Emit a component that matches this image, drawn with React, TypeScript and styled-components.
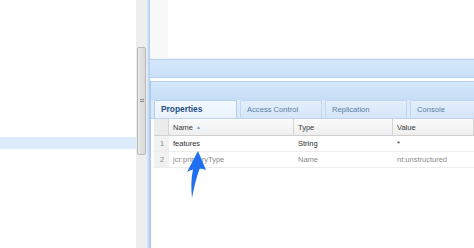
import styled, { createGlobalStyle } from 'styled-components';

const Global = createGlobalStyle`
  html, body { margin: 0; padding: 0; background: #fff; }
  body { font-family: "Liberation Sans", Arial, sans-serif; }
`;

const Screen = styled.div`
  position: relative;
  width: 474px;
  height: 248px;
  display: flex;
  overflow: hidden;
  background: #fff;
`;

const LeftPane = styled.div`
  width: 136px;
  flex-shrink: 0;
  padding-top: 137px;
  box-sizing: border-box;
`;

const SelectedRow = styled.div`
  height: 12px;
  background: #dcecfb;
`;

const ScrollTrack = styled.div`
  width: 11px;
  flex-shrink: 0;
  background: #eeeeee;
  padding-top: 47px;
  box-sizing: border-box;
  display: flex;
  justify-content: center;
`;

const Thumb = styled.div`
  width: 9px;
  height: 108px;
  box-sizing: border-box;
  border: 1px solid #b9b9b9;
  border-radius: 2px;
  background: linear-gradient(to right, #e9e9e9, #d9d9d9);
  display: flex;
  align-items: center;
  justify-content: center;
`;

const Grip = styled.div`
  width: 4px;
  height: 4px;
  background: repeating-linear-gradient(to bottom, #888 0 1px, transparent 1px 2px);
`;

const Splitter = styled.div`
  width: 3px;
  flex-shrink: 0;
  background: linear-gradient(to right, #d8e8f8, #c6dcf4 50%, #a9c9ec);
`;

const RightPane = styled.div`
  flex: 1;
  min-width: 0;
  overflow: hidden;
  display: flex;
  flex-direction: column;
  background: #fff;
`;

const TopArea = styled.div`
  height: 59px;
  display: flex;
  border-bottom: 1px solid #f0f4f8;
  box-sizing: border-box;
`;

const Gutter = styled.div`
  width: 18px;
  background: #f8f8f8;
`;

const Toolbar = styled.div`
  height: 17px;
  background: linear-gradient(to bottom, #d4e7fa, #c9e0f7);
  border-top: 1px solid #b9d3ef;
  border-bottom: 1px solid #b3cfee;
`;

const Panel = styled.div`
  flex: 1;
  margin-top: 3px;
  display: flex;
  flex-direction: column;
  border-left: 1px solid #a9c9ec;
`;

const PanelHead = styled.div`
  height: 19px;
  background: linear-gradient(to bottom, #d6e8fa, #c5ddf6);
  border-top: 1px solid #b8d2ee;
  box-sizing: border-box;
`;

const TabStrip = styled.div`
  display: flex;
  gap: 3px;
  padding: 0 0 0 3px;
  height: 18px;
  background: #dbe9f8;
  border-bottom: 1px solid #bcd4ee;
`;

const Tab = styled.div<{ $active?: boolean; $w: number }>`
  width: ${p => p.$w}px;
  flex-shrink: 0;
  box-sizing: border-box;
  border: 1px solid ${p => (p.$active ? '#b4cdea' : '#c2d7ef')};
  border-bottom: none;
  border-radius: 2px 2px 0 0;
  background: ${p =>
    p.$active
      ? 'linear-gradient(to bottom, #f4f9ff, #e9f2fc)'
      : 'linear-gradient(to bottom, #e2eefb, #d6e6f8)'};
  color: ${p => (p.$active ? '#234f86' : '#5a7ca3')};
  font-size: ${p => (p.$active ? '8.4px' : '7.6px')};
  font-weight: ${p => (p.$active ? 'bold' : 'normal')};
  line-height: 17px;
  padding-left: 6px;
  white-space: nowrap;
`;

const Grid = styled.div`
  margin-left: 3px;
  display: grid;
  grid-template-columns: 15px 125px 99px 1fr;
  font-size: 7.5px;
`;

const HeadCell = styled.div<{ $num?: boolean }>`
  height: 17px;
  line-height: 17px;
  box-sizing: border-box;
  padding-left: 4px;
  color: #3a3a3a;
  background: ${p => (p.$num ? '#ececec' : 'linear-gradient(to bottom, #fbfbfb, #eeeeee)')};
  border-right: 1px solid #d4d4d4;
  border-bottom: 1px solid #d0d0d0;
  white-space: nowrap;
`;

const Cell = styled.div<{ $num?: boolean; $dim?: boolean }>`
  height: 16px;
  line-height: 15px;
  box-sizing: border-box;
  padding-left: ${p => (p.$num ? 6 : 4)}px;
  color: ${p => (p.$dim ? '#8a8a8a' : '#2f2f2f')};
  background: ${p => (p.$num ? '#f1f1f1' : '#fff')};
  border-bottom: 1px solid #ededed;
  white-space: nowrap;
`;

const SortMark = styled.span`
  color: #7f9fc4;
  font-size: 5px;
  margin-left: 3px;
  vertical-align: 1px;
`;

const Arrow = styled.svg`
  position: absolute;
  left: 184px;
  top: 148px;
`;

const rows = [
  { n: 1, name: 'features', type: 'String', value: '*', dim: false },
  { n: 2, name: 'jcr:primaryType', type: 'Name', value: 'nt:unstructured', dim: true },
];

export default function App() {
  return (
    <Screen>
      <Global />
      <LeftPane>
        <SelectedRow />
      </LeftPane>
      <ScrollTrack>
        <Thumb>
          <Grip />
        </Thumb>
      </ScrollTrack>
      <Splitter />
      <RightPane>
        <TopArea>
          <Gutter />
        </TopArea>
        <Toolbar />
        <Panel>
          <PanelHead />
          <TabStrip>
            <Tab $active $w={83}>Properties</Tab>
            <Tab $w={82}>Access Control</Tab>
            <Tab $w={82}>Replication</Tab>
            <Tab $w={70}>Console</Tab>
          </TabStrip>
          <Grid>
            <HeadCell $num />
            <HeadCell>
              Name<SortMark>▲</SortMark>
            </HeadCell>
            <HeadCell>Type</HeadCell>
            <HeadCell>Value</HeadCell>
            {rows.map(r => (
              <>
                <Cell key={`n${r.n}`} $num $dim>{r.n}</Cell>
                <Cell key={`a${r.n}`} $dim={r.dim}>{r.name}</Cell>
                <Cell key={`t${r.n}`} $dim={r.dim}>{r.type}</Cell>
                <Cell key={`v${r.n}`} $dim={r.dim}>{r.value}</Cell>
              </>
            ))}
          </Grid>
        </Panel>
      </RightPane>
      <Arrow width="26" height="54" viewBox="0 0 26 54">
        <path
          d="M14 3 L22 22 C19 21 17 20.5 15.5 21 C12 30 10 40 8 50 C7 40 7 30 9 21.5 C7 22 5 23 3 24 Z"
          fill="#1f6ff0"
        />
      </Arrow>
    </Screen>
  );
}
